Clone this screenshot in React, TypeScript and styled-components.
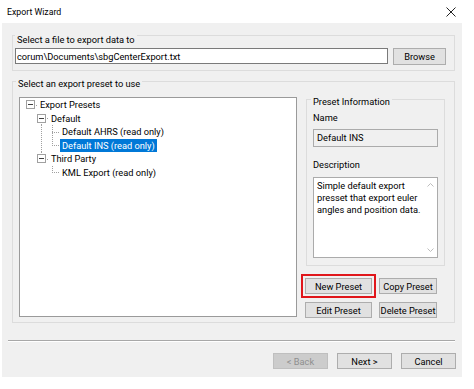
import styled, { createGlobalStyle } from 'styled-components'

const GlobalStyle = createGlobalStyle`
  * { box-sizing: border-box; }
  body {
    margin: 0;
    background: #fff;
    font-family: Roboto, "Liberation Sans", Arial, sans-serif;
    font-size: 9.25px;
    color: #000;
  }
`

const Window = styled.div`
  width: 474px;
  height: 389px;
  background: #fff;
`

const TitleBar = styled.div`
  height: 23px;
  display: flex;
  align-items: center;
  justify-content: space-between;
  padding: 0 18px 0 7px;
  font-size: 8.75px;
  color: #000;
`

const Client = styled.div`
  margin-left: 2px;
  width: 460px;
  height: 354px;
  background: #f0f0f0;
  padding: 1.5px 7px 0 10px;
  display: flex;
  flex-direction: column;
`

const GroupBox = styled.fieldset<{ $pad: string; $mt?: number; $ml?: number }>`
  margin: ${p => p.$mt ?? 0}px 0 0 ${p => p.$ml ?? 0}px;
  min-width: 0;
  border: 1px solid #dcdcdc;
  padding: ${p => p.$pad};
`

// the padding-top sets how far the caption sits below the frame line
const Legend = styled.legend<{ $shift?: number; $drop: number }>`
  padding: ${p => p.$drop}px 2px 0;
  margin-left: ${p => p.$shift ?? 0}px;
  line-height: 12px;
`

const FileRow = styled.div`
  margin-top: 2.5px;
  display: flex;
  gap: 5px;
  align-items: flex-start;
`

const PathInput = styled.input`
  width: 373px;
  height: 16px;
  margin: 0;
  border: 1px solid #7a7a7a;
  background: #fff;
  padding: 0 1px;
  font: inherit;
  color: #000;
  outline: none;
`

const Button = styled.button<{ $w: number; $h?: number; $off?: boolean; $mark?: boolean }>`
  width: ${p => p.$w}px;
  height: ${p => p.$h ?? 16}px;
  margin: 0;
  padding: 0;
  font: inherit;
  white-space: nowrap;
  color: ${p => (p.$off ? '#8f8f8f' : '#000')};
  background: ${p => (p.$off ? '#cccccc' : '#e1e1e1')};
  border: 1px solid ${p => (p.$off ? '#bfbfbf' : '#adadad')};
  outline: ${p => (p.$mark ? '2px solid #e0161b' : 'none')};
  outline-offset: 2px;
`

const PresetBody = styled.div`
  display: flex;
  gap: 8px;
  align-items: flex-start;
`

const TreeBox = styled.div`
  margin-top: 7px;
  width: 278px;
  height: 220px;
  background: #fff;
  border: 1px solid #9a9a9a;
  padding-left: 5px;
`

const TreeRow = styled.div`
  display: flex;
  align-items: center;
  height: 13.5px;
`

const dotsV = 'linear-gradient(to bottom, #a0a0a0 50%, transparent 50%)'
const dotsH = 'linear-gradient(to right, #a0a0a0 50%, transparent 50%)'

const Guide = styled.span<{ $up?: boolean; $down?: boolean; $right?: boolean }>`
  position: relative;
  flex: none;
  width: 11px;
  height: 100%;
  display: flex;
  align-items: center;
  justify-content: center;

  &::before {
    content: '';
    display: ${p => (p.$up || p.$down ? 'block' : 'none')};
    position: absolute;
    left: 5px;
    width: 1px;
    top: ${p => (p.$up ? '0' : '50%')};
    bottom: ${p => (p.$down ? '0' : '50%')};
    background-image: ${dotsV};
    background-size: 1px 2px;
  }

  &::after {
    content: '';
    display: ${p => (p.$right ? 'block' : 'none')};
    position: absolute;
    left: 5px;
    right: -2px;
    top: 50%;
    height: 1px;
    background-image: ${dotsH};
    background-size: 2px 1px;
  }
`

const Expander = styled.span`
  position: relative;
  z-index: 1;
  width: 9px;
  height: 9px;
  border: 1px solid #a0a0a0;
  background: #fff;
  display: flex;
  align-items: center;
  justify-content: center;

  &::after {
    content: '';
    width: 5px;
    height: 1px;
    background: #404040;
  }
`

const NodeLabel = styled.span<{ $selected?: boolean }>`
  margin-left: 2px;
  padding: 0 2px;
  height: 13px;
  line-height: 13px;
  white-space: nowrap;
  color: ${p => (p.$selected ? '#fff' : '#000')};
  background: ${p => (p.$selected ? '#0078d7' : 'transparent')};
`

const SideColumn = styled.div`
  display: flex;
  flex-direction: column;
`

const FieldLabel = styled.div<{ $mt: number }>`
  margin-top: ${p => p.$mt}px;
  line-height: 14px;
`

const ReadOnlyField = styled.div`
  margin-top: 4px;
  width: 125px;
  height: 18px;
  border: 1px solid #ababab;
  background: #f0f0f0;
  padding: 0 3px;
  line-height: 16px;
`

const DescriptionBox = styled.div`
  margin-top: 5px;
  width: 125px;
  height: 81px;
  border: 1px solid #ababab;
  background: #fff;
  display: flex;
`

const DescriptionText = styled.div`
  flex: 1;
  padding: 2px 1px 0 3px;
  line-height: 12px;
`

const ScrollTrack = styled.div`
  width: 13px;
  display: flex;
  flex-direction: column;
  justify-content: space-between;
  align-items: center;
  padding: 5px 0 5px;
`

const PresetButtons = styled.div`
  margin-top: 12px;
  display: grid;
  grid-template-columns: 67px 58px;
  gap: 8px 7px;
`

const Separator = styled.div`
  margin: 17px 0 0 -4px;
  width: 447px;
  height: 2px;
  border-top: 1px solid #a8a8a8;
  border-bottom: 1px solid #fff;
`

const Footer = styled.div`
  margin: 11px -1px 0 0;
  display: flex;
  justify-content: flex-end;
  gap: 9px;
`

const Chevron = ({ up }: { up?: boolean }) => (
  <svg width="7" height="4" viewBox="0 0 7 4">
    <path d={up ? 'M0.5 3.5 L3.5 0.5 L6.5 3.5' : 'M0.5 0.5 L3.5 3.5 L6.5 0.5'} fill="none" stroke="#bdbdbd" strokeWidth="1" />
  </svg>
)

const CloseIcon = () => (
  <svg width="10" height="10" viewBox="0 0 10 10">
    <path d="M0.5 0.5 L9.5 9.5 M9.5 0.5 L0.5 9.5" stroke="#222" strokeWidth="1" />
  </svg>
)

type Cell = { up?: boolean; down?: boolean; right?: boolean; box?: boolean }

const treeRows: { cells: Cell[]; label: string; selected?: boolean }[] = [
  { cells: [{ right: true, box: true }], label: 'Export Presets' },
  { cells: [{}, { down: true, right: true, box: true }], label: 'Default' },
  { cells: [{}, { up: true, down: true }, { up: true, down: true, right: true }], label: 'Default AHRS (read only)' },
  { cells: [{}, { up: true, down: true }, { up: true, right: true }], label: 'Default INS (read only)', selected: true },
  { cells: [{}, { up: true, right: true, box: true }], label: 'Third Party' },
  { cells: [{}, {}, { up: true, right: true }], label: 'KML Export (read only)' },
]

const App = () => {
  return (
    <>
      <GlobalStyle />
      <Window>
        <TitleBar>
          <span>Export Wizard</span>
          <CloseIcon />
        </TitleBar>
        <Client>
          <GroupBox $pad="0 8px 5px 2px">
            <Legend $drop={9}>Select a file to export data to</Legend>
            <FileRow>
              <PathInput readOnly value="corum\Documents\sbgCenterExport.txt" />
              <Button $w={53} $h={17}>Browse</Button>
            </FileRow>
          </GroupBox>

          <GroupBox $pad="0 9px 4px 6px" $mt={1}>
            <Legend $drop={6} $shift={-3}>Select an export preset to use</Legend>
            <PresetBody>
              <TreeBox>
                {treeRows.map(row => (
                  <TreeRow key={row.label}>
                    {row.cells.map((c, i) => (
                      <Guide key={i} $up={c.up} $down={c.down} $right={c.right}>
                        {c.box && <Expander />}
                      </Guide>
                    ))}
                    <NodeLabel $selected={row.selected}>{row.label}</NodeLabel>
                  </TreeRow>
                ))}
              </TreeBox>
              <SideColumn>
                <GroupBox $pad="0 6px 7px 6px" $ml={1}>
                  <Legend $drop={6} $shift={-2}>Preset Information</Legend>
                  <FieldLabel $mt={3}>Name</FieldLabel>
                  <ReadOnlyField>Default INS</ReadOnlyField>
                  <FieldLabel $mt={11}>Description</FieldLabel>
                  <DescriptionBox>
                    <DescriptionText>Simple default export presset that export euler angles and position data.</DescriptionText>
                    <ScrollTrack>
                      <Chevron up />
                      <Chevron />
                    </ScrollTrack>
                  </DescriptionBox>
                </GroupBox>
                <PresetButtons>
                  <Button $w={67} $mark>New Preset</Button>
                  <Button $w={58}>Copy Preset</Button>
                  <Button $w={67}>Edit Preset</Button>
                  <Button $w={58}>Delete Preset</Button>
                </PresetButtons>
              </SideColumn>
            </PresetBody>
          </GroupBox>

          <Separator />
          <Footer>
            <Button $w={55} $off>&lt; Back</Button>
            <Button $w={55}>Next &gt;</Button>
            <Button $w={55}>Cancel</Button>
          </Footer>
        </Client>
      </Window>
    </>
  )
}

export default App
